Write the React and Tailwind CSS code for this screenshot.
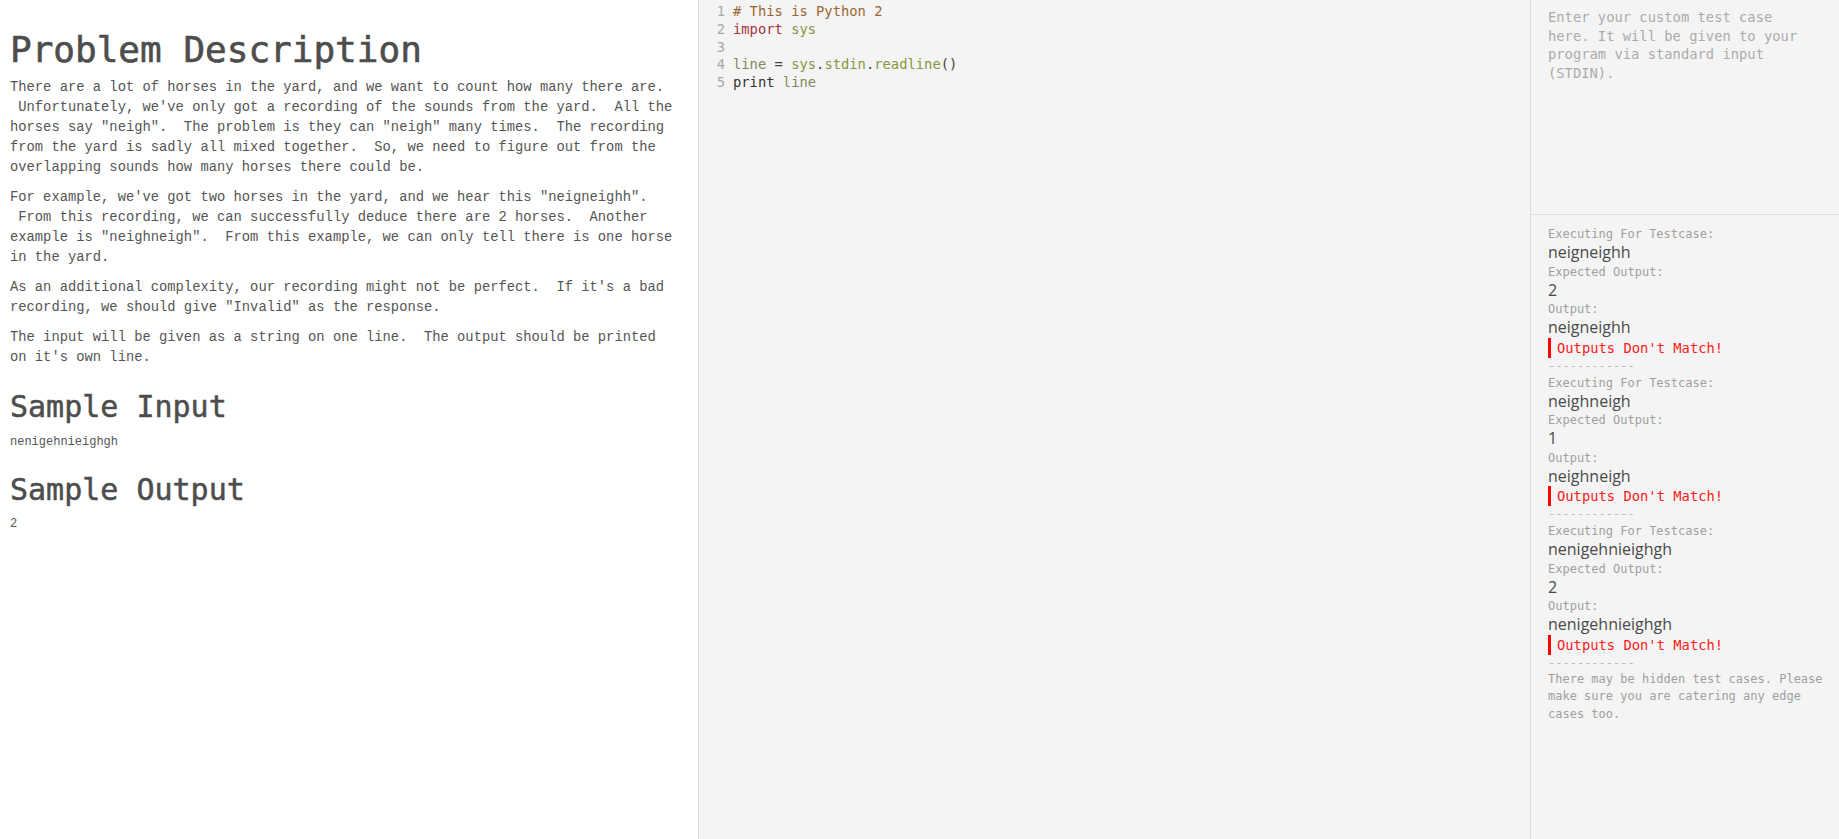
import React from "react";

const P1 = [
  "There are a lot of horses in the yard, and we want to count how many there are.",
  " Unfortunately, we've only got a recording of the sounds from the yard.  All the",
  "horses say \"neigh\".  The problem is they can \"neigh\" many times.  The recording",
  "from the yard is sadly all mixed together.  So, we need to figure out from the",
  "overlapping sounds how many horses there could be.",
];
const P2 = [
  "For example, we've got two horses in the yard, and we hear this \"neigneighh\".",
  " From this recording, we can successfully deduce there are 2 horses.  Another",
  "example is \"neighneigh\".  From this example, we can only tell there is one horse",
  "in the yard.",
];
const P3 = [
  "As an additional complexity, our recording might not be perfect.  If it's a bad",
  "recording, we should give \"Invalid\" as the response.",
];
const P4 = [
  "The input will be given as a string on one line.  The output should be printed",
  "on it's own line.",
];

function Para({ lines, className = "" }) {
  return (
    <div className={"whitespace-pre " + className}>
      {lines.map((l, i) => (
        <div key={i}>{l}</div>
      ))}
    </div>
  );
}

const cases = [
  { input: "neigneighh", expected: "2", output: "neigneighh" },
  { input: "neighneigh", expected: "1", output: "neighneigh" },
  { input: "nenigehnieighgh", expected: "2", output: "nenigehnieighgh" },
];

const mono = { fontFamily: '"Liberation Mono", monospace' };
const dmono = { fontFamily: '"DejaVu Sans Mono", monospace' };
const sans = { fontFamily: '"Open Sans", sans-serif' };

function Label({ children }) {
  return (
    <div className="text-[12px] leading-[18px] text-[#a0a0a0]" style={dmono}>
      {children}
    </div>
  );
}
function Value({ children }) {
  return (
    <div className="text-[16px] leading-[19.5px] text-[#4a4a4a]" style={sans}>
      {children}
    </div>
  );
}

export default function App() {
  return (
    <div className="flex h-[839px] w-[1839px] overflow-hidden bg-white">
      {/* Left: problem */}
      <div
        className="w-[699px] shrink-0 border-r border-[#dcdcdc] bg-white pl-[10px] pt-[30px] text-[#555]"
        style={mono}
      >
        <h1 className="text-[36px] leading-[40px] text-[#4d4d4d] [-webkit-text-stroke:0.6px_#4d4d4d]" style={dmono}>
          Problem Description
        </h1>
        <div className="mt-[8px] text-[13.8px] leading-[20px]">
          <Para lines={P1} />
          <Para lines={P2} className="mt-[10px]" />
          <Para lines={P3} className="mt-[10px]" />
          <Para lines={P4} className="mt-[10px]" />
        </div>
        <h2 className="mt-[21px] text-[30px] leading-[36px] text-[#4d4d4d] [-webkit-text-stroke:0.5px_#4d4d4d]" style={dmono}>
          Sample Input
        </h2>
        <div className="mt-[7px] text-[12px] leading-[20px]">nenigehnieighgh</div>
        <h2 className="mt-[20px] text-[30px] leading-[36px] text-[#4d4d4d] [-webkit-text-stroke:0.5px_#4d4d4d]" style={dmono}>
          Sample Output
        </h2>
        <div className="mt-[6px] text-[12px] leading-[20px]">2</div>
      </div>

      {/* Middle: code editor */}
      <div className="flex min-w-0 flex-1 bg-[#f4f4f4] pt-[3px] text-[13.8px] leading-[17.75px]" style={dmono}>
        <div className="w-[26px] shrink-0 text-right text-[#a8a8a8]">
          {[1, 2, 3, 4, 5].map((n) => (
            <div key={n}>{n}</div>
          ))}
        </div>
        <div className="whitespace-pre pl-[8px] text-[#444]">
          <div>
            <span className="text-[#9a6834]"># This is Python 2</span>
          </div>
          <div>
            <span className="text-[#a3343f]">import</span> <span className="text-[#84983f]">sys</span>
          </div>
          <div> </div>
          <div>
            <span className="text-[#7f8a5c]">line</span> = <span className="text-[#84983f]">sys</span>.
            <span className="text-[#84983f]">stdin</span>.<span className="text-[#84983f]">readline</span>()
          </div>
          <div>
            <span className="text-[#333]">print</span> <span className="text-[#7f8a5c]">line</span>
          </div>
        </div>
      </div>

      {/* Right: test panel */}
      <div className="flex w-[309px] shrink-0 flex-col border-l border-[#dcdcdc] bg-[#f4f4f4]">
        <div
          className="h-[215px] shrink-0 whitespace-pre border-b border-[#dcdcdc] pl-[17px] pt-[8px] text-[13.8px] leading-[18.7px] text-[#ababab]"
          style={dmono}
        >
          <div>Enter your custom test case</div>
          <div>here. It will be given to your</div>
          <div>program via standard input</div>
          <div>(STDIN).</div>
        </div>
        <div className="pl-[17px] pt-[10px]">
          {cases.map((c, i) => (
            <div key={i}>
              <Label>Executing For Testcase:</Label>
              <Value>{c.input}</Value>
              <Label>Expected Output:</Label>
              <Value>{c.expected}</Value>
              <Label>Output:</Label>
              <Value>{c.output}</Value>
              <div
                className="h-[20px] border-l-[3px] border-[#ff0000] pl-[6px] text-[13.8px] leading-[20px] text-[#ff1a1a]"
                style={dmono}
              >
                Outputs Don't Match!
              </div>
              <div className="text-[12px] leading-[16px] text-[#bdbdbd]" style={dmono}>
                ------------
              </div>
            </div>
          ))}
          <div className="whitespace-pre text-[12px] leading-[17.5px] text-[#a0a0a0]" style={dmono}>
            <div>There may be hidden test cases. Please</div>
            <div>make sure you are catering any edge</div>
            <div>cases too.</div>
          </div>
        </div>
      </div>
    </div>
  );
}
